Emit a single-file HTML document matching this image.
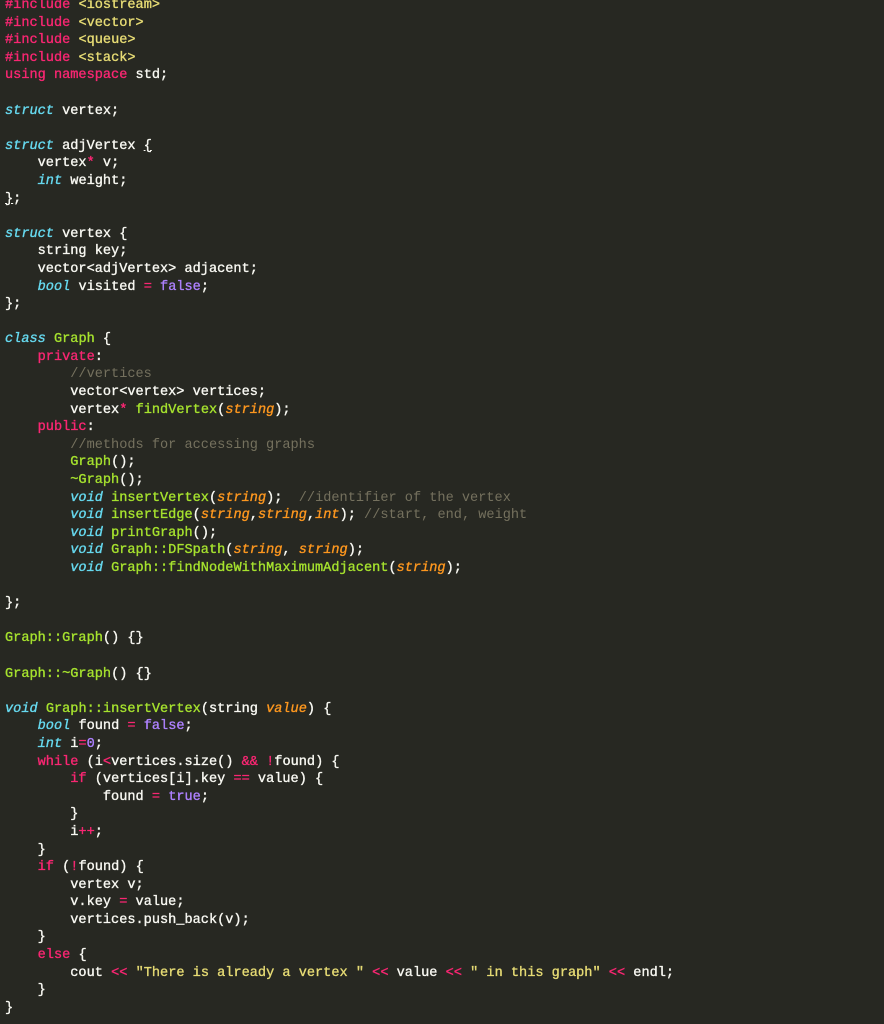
<!DOCTYPE html>
<html><head><meta charset="utf-8"><style>
html,body{margin:0;padding:0;background:#272822;width:884px;height:1024px;overflow:hidden}
pre{margin:0;position:absolute;left:5px;top:-3px;font-family:"Liberation Mono",monospace;font-size:13.6px;line-height:17.6px;color:#f8f8f2;-webkit-text-stroke:0.35px currentColor}
.k{color:#f92672}.s{color:#e6db74}.t{color:#66d9ef;font-style:italic}.f{color:#a6e22e}.n{color:#ae81ff}.p{color:#fd971f;font-style:italic}.c{color:#75715e;-webkit-text-stroke:0}
</style></head><body><pre><span class="k">#include</span> <span class="s">&lt;iostream&gt;</span>
<span class="k">#include</span> <span class="s">&lt;vector&gt;</span>
<span class="k">#include</span> <span class="s">&lt;queue&gt;</span>
<span class="k">#include</span> <span class="s">&lt;stack&gt;</span>
<span class="k">using namespace</span> std;

<span class="t">struct</span> vertex;

<span class="t">struct</span> adjVertex <u>{</u>
    vertex<span class="k">*</span> v;
    <span class="t">int</span> weight;
<u>}</u>;

<span class="t">struct</span> vertex {
    string key;
    vector&lt;adjVertex&gt; adjacent;
    <span class="t">bool</span> visited <span class="k">=</span> <span class="n">false</span>;
};

<span class="t">class</span> <span class="f">Graph</span> {
    <span class="k">private</span>:
        <span class="c">//vertices</span>
        vector&lt;vertex&gt; vertices;
        vertex<span class="k">*</span> <span class="f">findVertex</span>(<span class="p">string</span>);
    <span class="k">public</span>:
        <span class="c">//methods for accessing graphs</span>
        <span class="f">Graph</span>();
        <span class="f">~Graph</span>();
        <span class="t">void</span> <span class="f">insertVertex</span>(<span class="p">string</span>);  <span class="c">//identifier of the vertex</span>
        <span class="t">void</span> <span class="f">insertEdge</span>(<span class="p">string</span>,<span class="p">string</span>,<span class="p">int</span>); <span class="c">//start, end, weight</span>
        <span class="t">void</span> <span class="f">printGraph</span>();
        <span class="t">void</span> <span class="f">Graph::DFSpath</span>(<span class="p">string</span>, <span class="p">string</span>);
        <span class="t">void</span> <span class="f">Graph::findNodeWithMaximumAdjacent</span>(<span class="p">string</span>);

};

<span class="f">Graph::Graph</span>() {}

<span class="f">Graph::~Graph</span>() {}

<span class="t">void</span> <span class="f">Graph::insertVertex</span>(string <span class="p">value</span>) {
    <span class="t">bool</span> found <span class="k">=</span> <span class="n">false</span>;
    <span class="t">int</span> i<span class="k">=</span><span class="n">0</span>;
    <span class="k">while</span> (i<span class="k">&lt;</span>vertices.size() <span class="k">&amp;&amp;</span> <span class="k">!</span>found) {
        <span class="k">if</span> (vertices[i].key <span class="k">==</span> value) {
            found <span class="k">=</span> <span class="n">true</span>;
        }
        i<span class="k">++</span>;
    }
    <span class="k">if</span> (<span class="k">!</span>found) {
        vertex v;
        v.key <span class="k">=</span> value;
        vertices.push_back(v);
    }
    <span class="k">else</span> {
        cout <span class="k">&lt;&lt;</span> <span class="s">"There is already a vertex "</span> <span class="k">&lt;&lt;</span> value <span class="k">&lt;&lt;</span> <span class="s">" in this graph"</span> <span class="k">&lt;&lt;</span> endl;
    }
}</pre></body></html>
